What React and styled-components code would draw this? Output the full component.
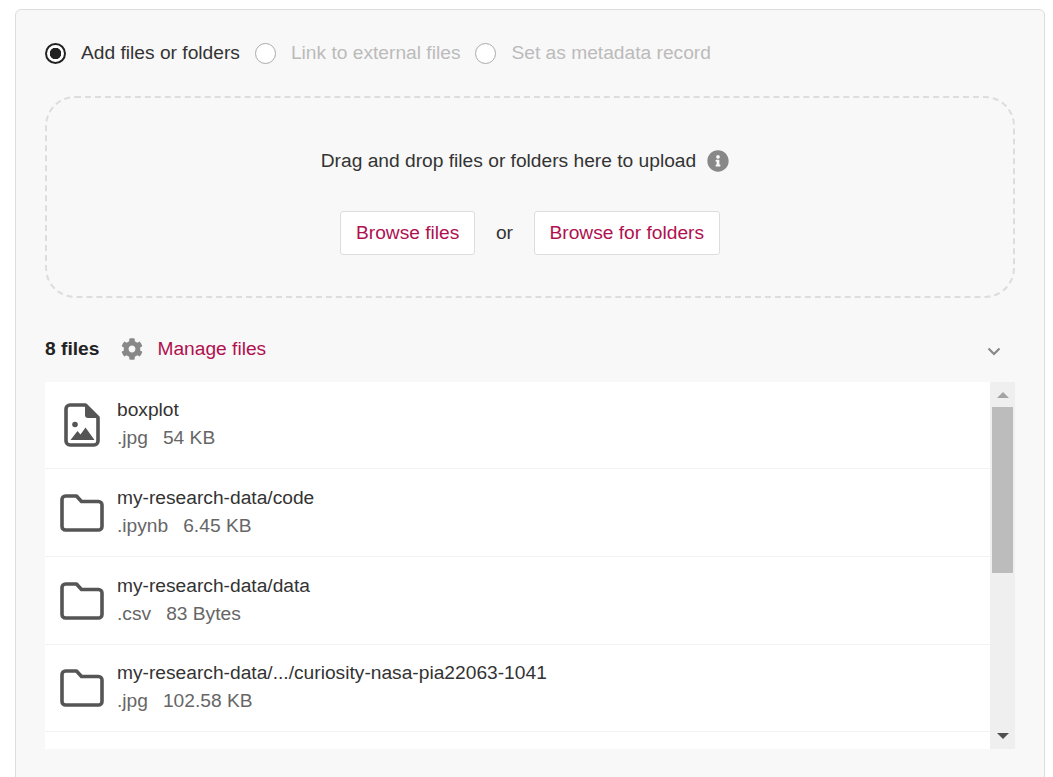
import React from 'react';
import styled, { createGlobalStyle } from 'styled-components';
import { FaCog, FaInfoCircle } from 'react-icons/fa';

const files = [
	{ name: 'boxplot', ext: '.jpg', size: '54 KB', icon: 'file' },
	{ name: 'my-research-data/code', ext: '.ipynb', size: '6.45 KB', icon: 'folder' },
	{ name: 'my-research-data/data', ext: '.csv', size: '83 Bytes', icon: 'folder' },
	{ name: 'my-research-data/.../curiosity-nasa-pia22063-1041', ext: '.jpg', size: '102.58 KB', icon: 'folder' }
];

const options = [
	{ label: 'Add files or folders', checked: true },
	{ label: 'Link to external files' },
	{ label: 'Set as metadata record' }
];

const FileIcon = () => (
	<svg width='36' height='44' viewBox='0 0 36 44'>
		<path
			d='M6 2h15.500L34 14.500V38a4 4 0 0 1-4 4H6a4 4 0 0 1-4-4V6a4 4 0 0 1 4-4z'
			fill='none'
			stroke='#555'
			strokeWidth='3.600'
			strokeLinejoin='round'
		/>
		<path d='M21 2L34 15H24a3 3 0 0 1-3-3z' fill='#555' />
		<circle cx='11' cy='21.500' r='2.800' fill='#555' />
		<path d='M6.500 37l7-9 3 3.500 5-7 9 12.500z' fill='#555' />
	</svg>
);

const FolderIcon = () => (
	<svg width='44' height='38' viewBox='0 0 44 38'>
		<path
			d='M5.500 2h11l5 5.500H38.500a3.500 3.500 0 0 1 3.500 3.500v21.500a3.500 3.500 0 0 1-3.500 3.500H5.500A3.500 3.500 0 0 1 2 32.500V5.500A3.500 3.500 0 0 1 5.500 2z'
			fill='none'
			stroke='#555'
			strokeWidth='3.600'
			strokeLinejoin='round'
		/>
	</svg>
);

const App = () => (
	<Page>
		<GlobalStyle />
		<Panel>
			<RadioRow>
				{options.map((item) => (
					<RadioItem key={item.label}>
						<Radio $checked={item.checked} />
						<RadioLabel $checked={item.checked}>{item.label}</RadioLabel>
					</RadioItem>
				))}
			</RadioRow>
			<DropZone>
				<DropText>
					Drag and drop files or folders here to upload
					<InfoIcon />
				</DropText>
				<Buttons>
					<Button>Browse files</Button>
					<span>or</span>
					<Button>Browse for folders</Button>
				</Buttons>
			</DropZone>
			<SummaryRow>
				<Count>8 files</Count>
				<GearIcon />
				<ManageLink>Manage files</ManageLink>
				<Chevron width='14' height='9' viewBox='0 0 14 9'>
					<path d='M1.500 1.500L7 7l5.500-5.500' fill='none' stroke='#888' strokeWidth='2.200' />
				</Chevron>
			</SummaryRow>
			<ListFrame>
				<FileList>
					{files.map((item) => (
						<FileRow key={item.name}>
							<IconCell>{item.icon === 'file' ? <FileIcon /> : <FolderIcon />}</IconCell>
							<FileText>
								<FileName>{item.name}</FileName>
								<FileMeta>
									<span>{item.ext}</span>
									<span>{item.size}</span>
								</FileMeta>
							</FileText>
						</FileRow>
					))}
				</FileList>
				<Scrollbar>
					<ArrowUp />
					<Track>
						<Thumb />
					</Track>
					<ArrowDown />
				</Scrollbar>
			</ListFrame>
		</Panel>
	</Page>
);

export default App;

const GlobalStyle = createGlobalStyle`
	html, body {
		margin: 0;
		height: 100%;
		overflow: hidden;
		background: #fff;
	}
	body {
		font-family: 'Liberation Sans', Arial, sans-serif;
		font-size: 19.2px;
		color: #333;
	}
`;

const Page = styled.div`
	padding: 9px 8px 0 15px;
`;

const Panel = styled.div`
	width: 1030px;
	box-sizing: border-box;
	padding: 22px 29px 60px;
	background: #f8f8f8;
	border: 1px solid #ddd;
	border-radius: 6px;
`;

const RadioRow = styled.div`
	display: flex;
	height: 42px;
	align-items: center;
	gap: 15px;
`;

const RadioItem = styled.label`
	display: flex;
	align-items: center;
	gap: 15px;
`;

const Radio = styled.span`
	width: 21px;
	height: 21px;
	box-sizing: border-box;
	border-radius: 50%;
	border: ${(props) => (props.$checked ? '2px solid #222' : '1px solid #aaa')};
	background: ${(props) => (props.$checked ? 'radial-gradient(circle, #222 0 5.5px, #fff 6px)' : '#fff')};
`;

const RadioLabel = styled.span`
	color: ${(props) => (props.$checked ? '#333' : '#bbb')};
`;

const DropZone = styled.div`
	margin-top: 22px;
	height: 202px;
	box-sizing: border-box;
	border: 2px dashed #ddd;
	border-radius: 30px;
	display: flex;
	flex-direction: column;
	align-items: center;
	padding-top: 51px;
`;

const DropText = styled.div`
	display: flex;
	align-items: center;
	gap: 11px;
	height: 24px;
	margin-right: 10px;
`;

const InfoIcon = styled(FaInfoCircle)`
	width: 22px;
	height: 22px;
	color: #888;
`;

const Buttons = styled.div`
	display: flex;
	align-items: center;
	gap: 21px;
	margin-top: 38px;
`;

const Button = styled.button`
	height: 44px;
	padding: 0 14.5px;
	background: #fff;
	border: 1px solid #ddd;
	border-radius: 3px;
	color: #b0104f;
	font: inherit;
`;

const SummaryRow = styled.div`
	display: flex;
	align-items: center;
	height: 32px;
	margin-top: 35px;
`;

const Count = styled.strong`
	font-weight: 700;
	color: #222;
`;

const GearIcon = styled(FaCog)`
	width: 22px;
	height: 22px;
	margin-left: 22px;
	color: #888;
`;

const ManageLink = styled.span`
	margin-left: 14px;
	color: #b0104f;
`;

const Chevron = styled.svg`
	margin-left: auto;
	margin-right: 14px;
	margin-top: 5px;
`;

const ListFrame = styled.div`
	display: flex;
	height: 367px;
	margin-top: 17px;
	overflow: hidden;
`;

const FileList = styled.div`
	flex: 1;
	background: #fff;
	overflow: hidden;
`;

const FileRow = styled.div`
	display: flex;
	align-items: center;
	height: 88px;
	box-sizing: border-box;
	border-bottom: 1px solid #f2f2f2;

	&:nth-child(1),
	&:nth-child(4) {
		height: 87px;
	}
`;

const IconCell = styled.div`
	width: 72px;
	display: flex;
	justify-content: center;
	padding-left: 2px;
	box-sizing: border-box;
`;

const FileText = styled.div`
	margin-bottom: 2px;
`;

const FileName = styled.div`
	line-height: 28px;
`;

const FileMeta = styled.div`
	display: flex;
	gap: 15px;
	line-height: 28px;
	color: #666;
`;

const Scrollbar = styled.div`
	width: 25px;
	display: flex;
	flex-direction: column;
	align-items: center;
	background: #efefef;
`;

const ArrowUp = styled.div`
	width: 0;
	height: 0;
	margin: 10px 0 9px;
	border-left: 6px solid transparent;
	border-right: 6px solid transparent;
	border-bottom: 6px solid #a3a3a3;
`;

const Track = styled.div`
	flex: 1;
	align-self: stretch;
	display: flex;
	justify-content: center;
`;

const Thumb = styled.div`
	width: 21px;
	height: 166px;
	background: #bcbcbc;
`;

const ArrowDown = styled.div`
	width: 0;
	height: 0;
	margin: 9px 0 10px;
	border-left: 6px solid transparent;
	border-right: 6px solid transparent;
	border-top: 6px solid #505050;
`;
